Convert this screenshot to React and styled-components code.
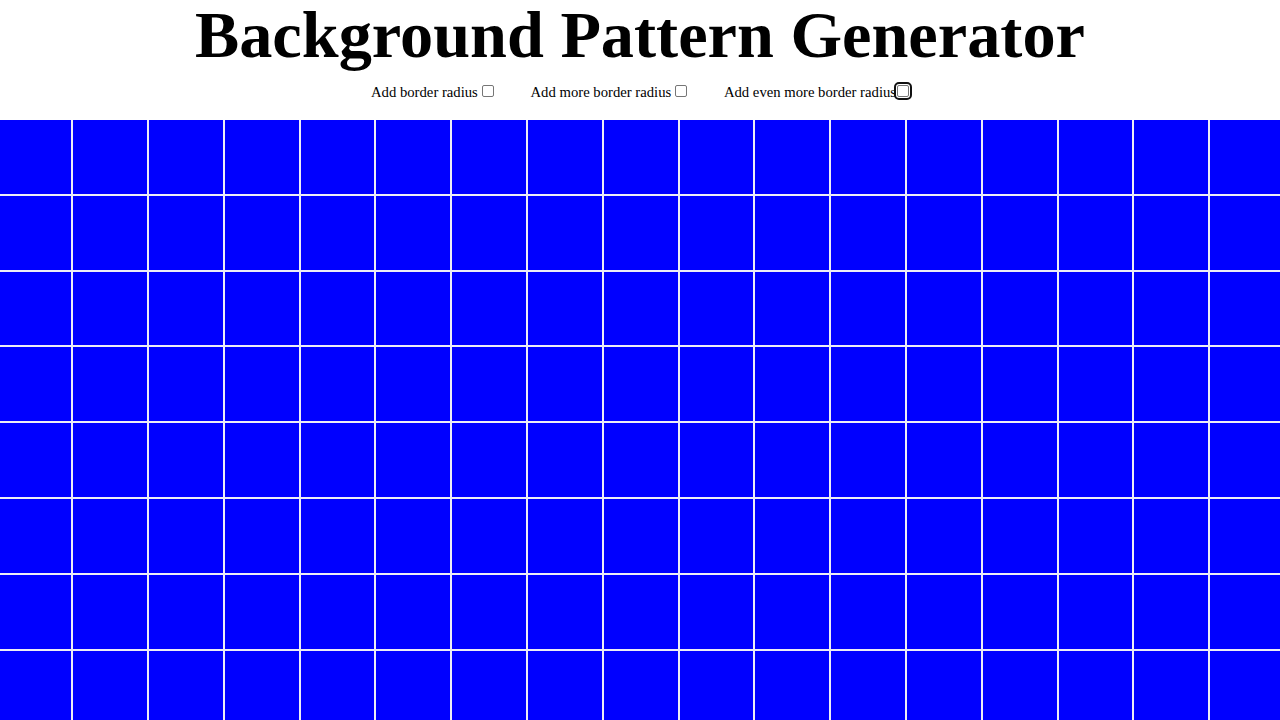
import React, { useState } from "react";
import styled, { createGlobalStyle, css } from "styled-components";

const GlobalStyle = createGlobalStyle`
  html, body {
    margin: 0;
    padding: 0;
    background: #ffffff;
    overflow: hidden;
  }
  body {
    font-family: "Liberation Serif", "Times New Roman", serif;
    color: #000;
  }
`;

const Page = styled.div`
  display: flex;
  flex-direction: column;
  height: 720px;
  width: 1280px;
`;

const Header = styled.header`
  display: flex;
  flex-direction: column;
  align-items: center;
  padding-top: 2px;
`;

const Title = styled.h1`
  margin: 0;
  font-family: "Liberation Serif", "Times New Roman", serif;
  font-weight: 700;
  font-size: 66.3px;
  line-height: 66px;
  white-space: nowrap;
`;

const Options = styled.div`
  display: flex;
  justify-content: center;
  align-items: baseline;
  gap: 37px;
  margin-top: 14px;
  height: 20px;
  font-size: 14.7px;
  line-height: 20px;
`;

const Option = styled.label`
  display: inline-flex;
  align-items: baseline;
  white-space: pre;
  cursor: pointer;
`;

const Box = styled.input.attrs({ type: "checkbox" })`
  appearance: none;
  -webkit-appearance: none;
  box-sizing: border-box;
  width: 12px;
  height: 12px;
  margin: 0;
  border: 1px solid #767676;
  border-radius: 2px;
  background: #fff;
  cursor: pointer;

  &:checked {
    background: #0075ff;
    border-color: #0075ff;
  }

  ${(p) =>
    p.$ring &&
    css`
      outline: 2px solid #111;
      outline-offset: 1px;
      margin-left: 1px;
    `}
`;

const Canvas = styled.main`
  flex: 1;
  margin-top: 18px;
  overflow: hidden;
  background: #ececf6;
`;

const Tiles = styled.div`
  display: grid;
  grid-template-columns: repeat(18, 73.8px);
  grid-auto-rows: 73.8px;
  gap: 2px;
  margin-left: -2.5px;
`;

const Tile = styled.div`
  background: #0000ff;
  border-radius: ${(p) => p.$radius}px;
`;

const options = [
  { key: "some", label: "Add border radius ", radius: 8 },
  { key: "more", label: "Add more border radius ", radius: 20 },
  { key: "most", label: "Add even more border radius", radius: 37, ring: true },
];

export default function App() {
  const [checked, setChecked] = useState({ some: false, more: false, most: false });

  const radius = options.reduce(
    (r, o) => (checked[o.key] ? Math.max(r, o.radius) : r),
    0
  );

  const tiles = Array.from({ length: 18 * 8 }, (_, i) => i);

  return (
    <Page>
      <GlobalStyle />
      <Header>
        <Title>Background Pattern Generator</Title>
        <Options>
          {options.map((o) => (
            <Option key={o.key}>
              {o.label}
              <Box
                $ring={o.ring}
                checked={checked[o.key]}
                onChange={(e) =>
                  setChecked((c) => ({ ...c, [o.key]: e.target.checked }))
                }
              />
            </Option>
          ))}
        </Options>
      </Header>
      <Canvas>
        <Tiles>
          {tiles.map((i) => (
            <Tile key={i} $radius={radius} />
          ))}
        </Tiles>
      </Canvas>
    </Page>
  );
}
